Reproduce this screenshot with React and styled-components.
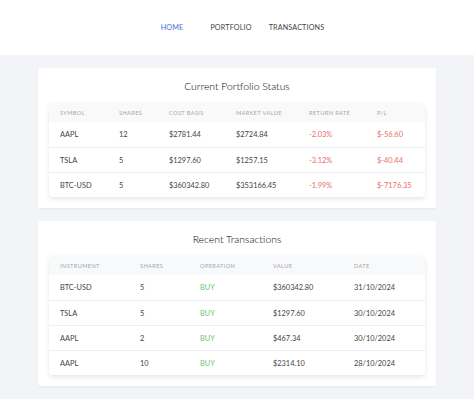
import styled, { createGlobalStyle } from "styled-components";

const GlobalStyle = createGlobalStyle`
  body {
    margin: 0;
    background: #f3f4f7;
    font-family: Lato, "Open Sans", sans-serif;
    color: #333;
  }
`;

const portfolio = [
  { symbol: "AAPL", shares: 12, cost: "$2781.44", market: "$2724.84", rate: "-2.03%", pl: "$-56.60" },
  { symbol: "TSLA", shares: 5, cost: "$1297.60", market: "$1257.15", rate: "-3.12%", pl: "$-40.44" },
  { symbol: "BTC-USD", shares: 5, cost: "$360342.80", market: "$353166.45", rate: "-1.99%", pl: "$-7176.35" },
];

const transactions = [
  { instrument: "BTC-USD", shares: 5, op: "BUY", value: "$360342.80", date: "31/10/2024" },
  { instrument: "TSLA", shares: 5, op: "BUY", value: "$1297.60", date: "30/10/2024" },
  { instrument: "AAPL", shares: 2, op: "BUY", value: "$467.34", date: "30/10/2024" },
  { instrument: "AAPL", shares: 10, op: "BUY", value: "$2314.10", date: "28/10/2024" },
];

const App = () => {
  return (
    <>
      <GlobalStyle />
      <NavBar>
        <NavLink $active $gap={27}>HOME</NavLink>
        <NavLink $gap={17}>PORTFOLIO</NavLink>
        <NavLink>TRANSACTIONS</NavLink>
      </NavBar>
      <Main>
        <Card>
          <Title>Current Portfolio Status</Title>
          <Table>
            <colgroup>
              <col style={{ width: 59 }} />
              <col style={{ width: 50 }} />
              <col style={{ width: 67 }} />
              <col style={{ width: 73 }} />
              <col style={{ width: 68 }} />
              <col />
            </colgroup>
            <thead>
              <tr>
                <Th>Symbol</Th>
                <Th>Shares</Th>
                <Th>Cost Basis</Th>
                <Th>Market Value</Th>
                <Th>Return Rate</Th>
                <Th>P/L</Th>
              </tr>
            </thead>
            <tbody>
              {portfolio.map((p) => (
                <Row key={p.symbol}>
                  <Td>{p.symbol}</Td>
                  <Td>{p.shares}</Td>
                  <Td>{p.cost}</Td>
                  <Td>{p.market}</Td>
                  <Td $tone="loss">{p.rate}</Td>
                  <Td $tone="loss">{p.pl}</Td>
                </Row>
              ))}
            </tbody>
          </Table>
        </Card>

        <Card>
          <Title>Recent Transactions</Title>
          <Table>
            <colgroup>
              <col style={{ width: 80 }} />
              <col style={{ width: 60 }} />
              <col style={{ width: 73 }} />
              <col style={{ width: 81 }} />
              <col />
            </colgroup>
            <thead>
              <tr>
                <Th>Instrument</Th>
                <Th>Shares</Th>
                <Th>Operation</Th>
                <Th>Value</Th>
                <Th>Date</Th>
              </tr>
            </thead>
            <tbody>
              {transactions.map((t, i) => (
                <Row key={i}>
                  <Td>{t.instrument}</Td>
                  <Td>{t.shares}</Td>
                  <Td $tone="gain">{t.op}</Td>
                  <Td>{t.value}</Td>
                  <Td>{t.date}</Td>
                </Row>
              ))}
            </tbody>
          </Table>
        </Card>
      </Main>
    </>
  );
};

export default App;

const NavBar = styled.nav`
  height: 55px;
  background: #ffffff;
  display: flex;
  align-items: center;
  justify-content: center;
  padding-left: 11px;
  padding-bottom: 1px;
  box-sizing: border-box;
`;

const NavLink = styled.a`
  font-size: 7.2px;
  font-weight: 400;
  letter-spacing: 0.15px;
  color: ${({ $active }) => ($active ? "#4a6fd0" : "#444")};
  margin-right: ${({ $gap }) => ($gap ? `${$gap}px` : "0")};
  cursor: pointer;
`;

const Main = styled.main`
  padding: 13px 38px 14px;
  display: flex;
  flex-direction: column;
  gap: 13px;
`;

const Card = styled.section`
  background: #ffffff;
  border-radius: 2px;
  box-shadow: 0 1px 2px rgba(0, 0, 0, 0.05);
  padding: 12px 11px 11px;
`;

const Title = styled.h2`
  margin: 0 0 10px;
  font-size: 10.4px;
  font-weight: 300;
  line-height: 13px;
  text-align: center;
  color: #000;
`;

const Table = styled.table`
  width: 100%;
  border-collapse: separate;
  border-spacing: 0;
  table-layout: fixed;
  border-radius: 4px;
  box-shadow: 0 2px 5px rgba(0, 0, 0, 0.1);
  overflow: hidden;
`;

const Th = styled.th`
  height: 19px;
  padding: 0 0 0 11px;
  background: #f8f9fb;
  text-align: left;
  font-size: 5.6px;
  font-weight: 400;
  letter-spacing: 0.4px;
  text-transform: uppercase;
  color: #a6a6a6;
`;

const Row = styled.tr`
  & + & td {
    border-top: 1px solid #eeeff2;
  }
`;

const Td = styled.td`
  height: 25px;
  box-sizing: border-box;
  padding: 0 0 0 11px;
  font-size: 7.4px;
  font-weight: 400;
  color: ${({ $tone }) =>
    $tone === "loss" ? "#e8706b" : $tone === "gain" ? "#6cc875" : "#444"};
  white-space: nowrap;
`;
